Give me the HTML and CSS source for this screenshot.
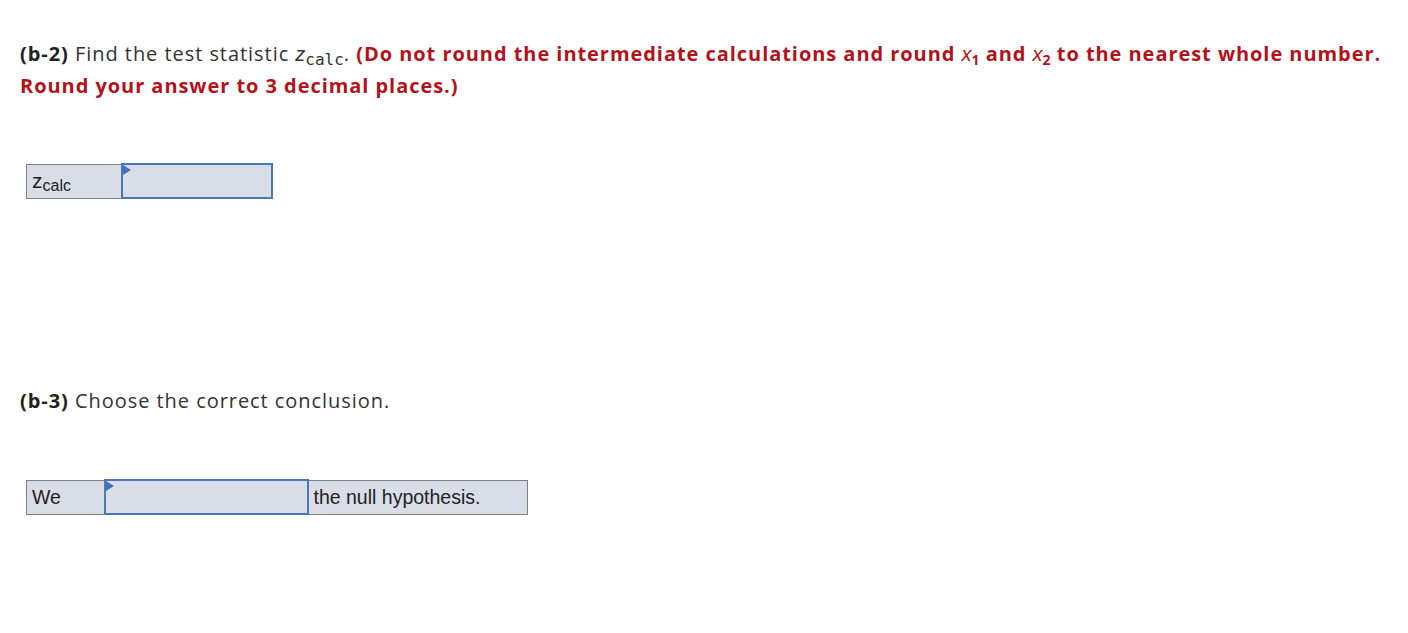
FILE: index.html
```html
<!DOCTYPE html>
<html>
<head>
<meta charset="utf-8">
<link rel="stylesheet" href="styles.css">
</head>
<body>
<div class="page">
  <section class="part part-b2">
    <p class="prompt"><b>(b-2)</b> Find the test statistic <i class="var">z</i><sub class="mono">calc</sub>. <span class="note">(Do not round the intermediate calculations and round <i class="var">x</i><sub>1</sub> and <i class="var">x</i><sub>2</sub> to the nearest whole number.<br>Round your answer to 3 decimal places.)</span></p>
    <table class="grid grid-z">
      <tr>
        <td class="label lz"><span class="zl">z</span><sub>calc</sub></td>
        <td class="input w150"><span class="flag"></span></td>
      </tr>
    </table>
  </section>
  <section class="part part-b3">
    <p class="prompt"><b>(b-3)</b> Choose the correct conclusion.</p>
    <table class="grid grid-we">
      <tr>
        <td class="label w78">We</td>
        <td class="input w203"><span class="flag"></span></td>
        <td class="label w220">the null hypothesis.</td>
      </tr>
    </table>
  </section>
</div>
</body>
</html>
```
FILE: styles.css
```css
html, body { margin: 0; padding: 0; background: #fff; }
.page { padding: 38px 20px 0 20px; font-family: "Open Sans", "Liberation Sans", sans-serif; color: #333; }
.prompt { margin: 0; font-size: 20px; line-height: 31px; white-space: nowrap; letter-spacing: 0.95px; }
.prompt b { color: #222; font-weight: 700; }
.note { color: #b4121b; font-weight: 700; }
.var { font-style: italic; font-family: "Liberation Sans", sans-serif; font-weight: normal; font-size: 20px; letter-spacing: 0; }
sub { font-size: 70%; line-height: 0; vertical-align: -4px; letter-spacing: 0; }
.mono { font-family: "DejaVu Sans Mono", monospace; font-size: 16px; }
.grid { border-collapse: collapse; margin-left: 6px; font-family: "Liberation Sans", Arial, sans-serif; font-size: 19.5px; color: #222; }
.grid-z { margin-top: 62px; }
.part-b3 { margin-top: 186px; }
.grid-we { margin-top: 63px; }
.grid td { height: 34px; padding: 0 0 0 5px; background: #d9dde8; border: 1px solid #7f7f7f; box-sizing: border-box; vertical-align: middle; }
.grid td.input { position: relative; border: 2px solid #4a78b5; padding: 0; }
.zl { font-size: 21px; }
.grid td.label sub { font-size: 16px; vertical-align: -3px; }
.w150 { width: 150px; }
.w78 { width: 78px; }
.w203 { width: 203px; }
.w220 { width: 220px; }
.lz { width: 95px; }
.flag { position: absolute; left: 0; top: 0; width: 0; height: 0; border-top: 5px solid transparent; border-bottom: 5px solid transparent; border-left: 8px solid #3b73c0; }
```
